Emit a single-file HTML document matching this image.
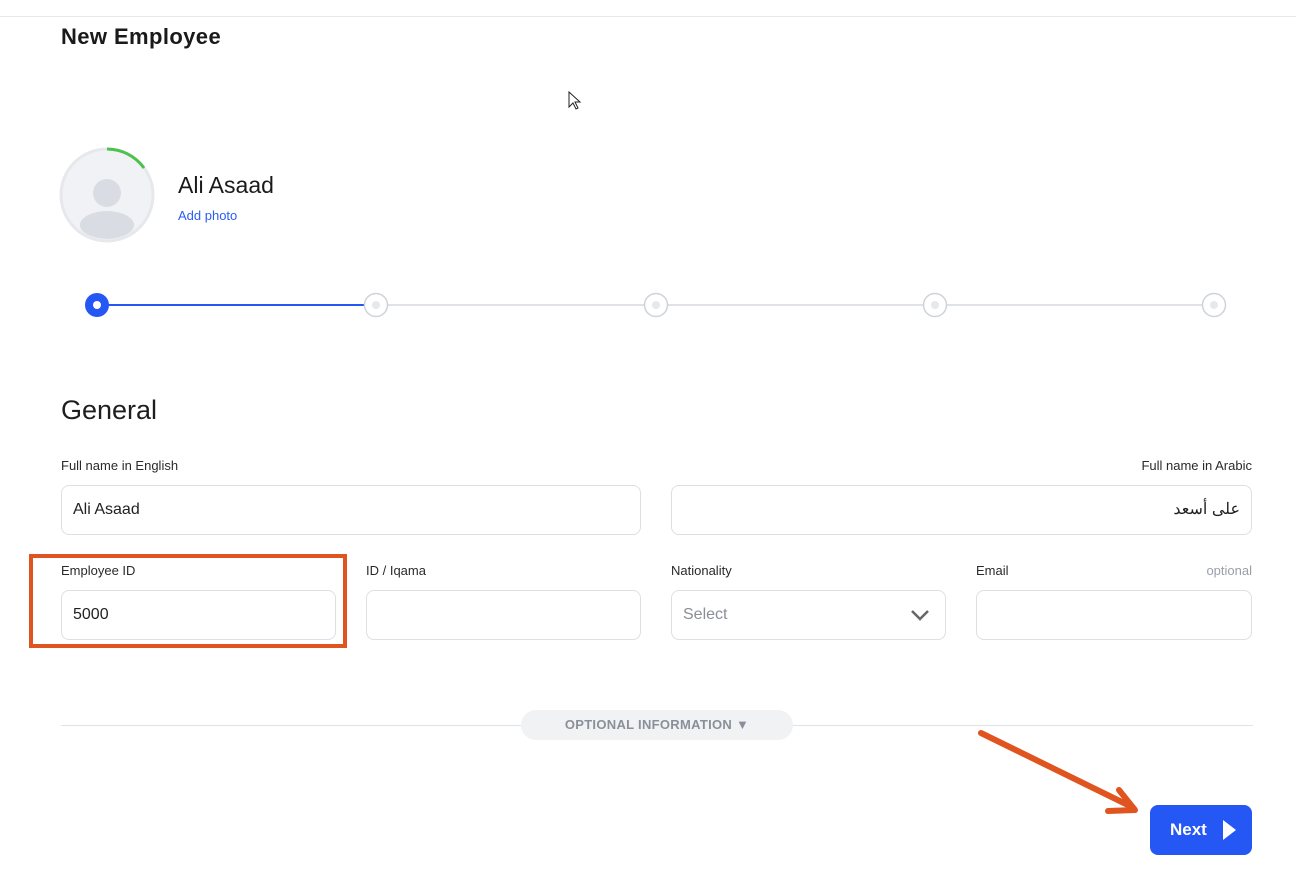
<!DOCTYPE html>
<html><head><meta charset="utf-8"><style>
*{margin:0;padding:0;box-sizing:border-box}
body{width:1296px;height:878px;background:#fff;font-family:"Liberation Sans","Noto Sans CJK SC",sans-serif;position:relative;overflow:hidden;color:#1e1e1e}
.a{position:absolute}
.lbl{position:absolute;font-size:13px;color:#2a2a2a}
.inp{position:absolute;height:50px;border:1px solid #dcdfe4;border-radius:8px;font-size:16px;padding:0 11px;line-height:48px;color:#222}
</style></head><body>
<div class="a" style="left:0;top:16px;width:1296px;height:1px;background:#e6e8eb"></div>
<div class="a" style="left:61px;top:24px;font-size:22px;font-weight:bold;color:#1a1a1a;letter-spacing:.4px">New Employee</div>
<svg class="a" style="left:568px;top:91px" width="14" height="20" viewBox="0 0 14 20"><path d="M1 1 L1 16 L5 12 L8 18 L10 17 L7 11 L12 11 Z" fill="#fff" stroke="#222" stroke-width="1"/></svg>
<svg class="a" style="left:58px;top:146px" width="100" height="100" viewBox="0 0 100 100">
<defs><clipPath id="c"><circle cx="49" cy="49" r="44"/></clipPath></defs>
<circle cx="49" cy="49" r="46" fill="#f0f2f5" stroke="#e6e8eb" stroke-width="3"/>
<path d="M49 3 A46 46 0 0 1 86 22" fill="none" stroke="#4cc14c" stroke-width="3"/>
<circle cx="49" cy="47" r="14" fill="#d9dde3"/>
<ellipse cx="49" cy="79" rx="27" ry="14" fill="#d9dde3" clip-path="url(#c)"/>
</svg>
<div class="a" style="left:178px;top:172px;font-size:23px;color:#1a1a1a">Ali Asaad</div>
<div class="a" style="left:178px;top:208px;font-size:13px;color:#2b5cf5">Add photo</div>
<div class="a" style="left:97px;top:304px;width:1117px;height:2px;background:#dfe2e6"></div>
<div class="a" style="left:97px;top:304px;width:279px;height:2px;background:#2557f5"></div>
<div class="a" style="left:85px;top:293px;width:24px;height:24px;border-radius:50%;background:#2557f5"></div>
<div class="a" style="left:93px;top:301px;width:8px;height:8px;border-radius:50%;background:#fff"></div>
<svg class="a" style="left:0;top:0" width="1296" height="878">
<g fill="#fff" stroke="#cfd3d9" stroke-width="1.5"><circle cx="376" cy="305" r="11.5"/><circle cx="656" cy="305" r="11.5"/><circle cx="935" cy="305" r="11.5"/><circle cx="1214" cy="305" r="11.5"/></g>
<g fill="#e6e8eb"><circle cx="376" cy="305" r="4"/><circle cx="656" cy="305" r="4"/><circle cx="935" cy="305" r="4"/><circle cx="1214" cy="305" r="4"/></g>
</svg>
<div class="a" style="left:61px;top:395px;font-size:27px;color:#1e1e1e">General</div>
<div class="lbl" style="left:61px;top:458px">Full name in English</div>
<div class="lbl" style="right:44px;top:458px">Full name in Arabic</div>
<div class="inp" style="left:61px;top:485px;width:580px">Ali Asaad</div>
<div class="inp" style="left:671px;top:485px;width:581px;text-align:right;direction:rtl">علی أسعد</div>
<div class="lbl" style="left:61px;top:563px">Employee ID</div>
<div class="lbl" style="left:366px;top:563px">ID / Iqama</div>
<div class="lbl" style="left:671px;top:563px">Nationality</div>
<div class="lbl" style="left:976px;top:563px">Email</div>
<div class="lbl" style="right:44px;top:563px;color:#9aa0a8">optional</div>
<div class="inp" style="left:61px;top:590px;width:275px">5000</div>
<div class="inp" style="left:366px;top:590px;width:275px"></div>
<div class="inp" style="left:671px;top:590px;width:275px;color:#8a8f96">Select</div>
<svg class="a" style="left:910px;top:608px" width="20" height="14"><path d="M2 3 L10 11 L18 3" fill="none" stroke="#666" stroke-width="2.5"/></svg>
<div class="inp" style="left:976px;top:590px;width:276px"></div>
<div class="a" style="left:29px;top:554px;width:318px;height:94px;border:4px solid #e0541f"></div>
<div class="a" style="left:61px;top:725px;width:1192px;height:1px;background:#dfe2e6"></div>
<div class="a" style="left:521px;top:710px;width:272px;height:30px;border-radius:15px;background:#f1f2f4;font-size:13px;font-weight:bold;color:#8a9099;line-height:30px;text-align:center;letter-spacing:.3px">OPTIONAL INFORMATION &#9660;</div>
<svg class="a" style="left:0;top:0" width="1296" height="878"><g stroke="#e0541f" stroke-width="6" stroke-linecap="round" stroke-linejoin="round" fill="none"><path d="M981 733 L1132 807"/><path d="M1119 790 L1135 810 L1108 811"/></g></svg>
<div class="a" style="left:1150px;top:805px;width:102px;height:50px;border-radius:8px;background:#2557f5;color:#fff;font-size:17px;font-weight:bold;line-height:50px;padding-left:20px">Next</div>
<svg class="a" style="left:1221px;top:819px" width="16" height="22"><path d="M2 1 L15 11 L2 21 Z" fill="#fff"/></svg>
</body></html>
